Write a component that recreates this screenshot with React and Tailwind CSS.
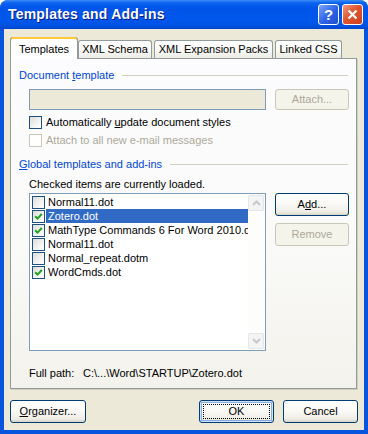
import React from "react";

const items = [
    { name: "Normal11.dot", checked: false },
    { name: "Zotero.dot", checked: true, selected: true },
    { name: "MathType Commands 6 For Word 2010.dot", checked: true },
    { name: "Normal11.dot", checked: false },
    { name: "Normal_repeat.dotm", checked: false },
    { name: "WordCmds.dot", checked: true },
];

function Check({ checked, disabled }) {
    return (
        <span
            className={
                disabled
                    ? "flex h-[13px] w-[13px] shrink-0 items-center justify-center border border-[#CAC8BB] bg-white"
                    : "flex h-[13px] w-[13px] shrink-0 items-center justify-center border border-[#1C5180] bg-[linear-gradient(135deg,#DCDCD7_0%,#F4F4F1_60%,#FFFFFF_100%)]"
            }
        >
            {checked && (
                <svg width="9" height="9" viewBox="0 0 9 9">
                    <path d="M1.2 4.2 L3.5 6.6 L7.8 2" stroke="#21A121" strokeWidth="2" fill="none" />
                </svg>
            )}
        </span>
    );
}

function Btn({ children, disabled, isDefault, className = "" }) {
    if (disabled) {
        return (
            <div className={`flex items-center justify-center rounded-[3px] border border-[#C9C7BA] bg-[#F5F4EA] text-[#ACA899] ${className}`}>
                {children}
            </div>
        );
    }
    return (
        <div
            className={`relative flex items-center justify-center rounded-[3px] border border-[#003C74] bg-[linear-gradient(to_bottom,#FFFFFF_0%,#F9F8F4_50%,#EEEDE5_85%,#D8D2C6_100%)] text-black ${isDefault ? "shadow-[inset_0_0_0_1px_#CEE3FC,inset_0_0_0_2px_#89ADE4]" : ""} ${className}`}
        >
            {isDefault && <span className="absolute inset-[3px] border border-dotted border-black" />}
            <span className="relative">{children}</span>
        </div>
    );
}

function GroupLabel({ children }) {
    return (
        <div className="flex h-[13px] items-center pl-[8px] pr-[8px]">
            <span className="text-[#0046D5]">{children}</span>
            <span className="ml-[8px] h-px flex-1 bg-[#D0D0BF]" />
        </div>
    );
}

function ScrollArrow({ up }) {
    return (
        <div className="flex h-[16px] w-[16px] items-center justify-center rounded-[2px] border border-[#E3E6EE] bg-[#F4F4F2]">
            <svg width="9" height="6" viewBox="0 0 9 6">
                <path d={up ? "M1 5 L4.5 1.5 L8 5" : "M1 1 L4.5 4.5 L8 1"} stroke="#C4C8D2" strokeWidth="2" fill="none" />
            </svg>
        </div>
    );
}

export default function App() {
    return (
        <div className="h-[434px] w-[368px] overflow-hidden rounded-t-[8px] bg-[#0854DD] font-['Liberation_Sans',Arial,sans-serif] text-[11px] leading-[13px] text-black">
            {/* title bar */}
            <div className="flex h-[29px] items-center bg-[linear-gradient(to_bottom,#3D8DF6_0px,#0A62F0_3px,#0055E8_8px,#0057EC_20px,#0051E0_26px,#0046CC_29px)] pl-[8px] pr-[5px]">
                <span className="flex-1 text-[14px] font-bold tracking-[0.2px] text-white [text-shadow:1px_1px_0_#0A1883]">
                    Templates and Add-ins
                </span>
                <div className="flex h-[21px] w-[21px] items-center justify-center rounded-[3px] border border-white bg-[linear-gradient(135deg,#7AA5F9_0%,#2D62E6_55%,#1F4FD0_100%)] text-[15px] font-bold text-white">
                    ?
                </div>
                <div className="ml-[3px] flex h-[21px] w-[21px] items-center justify-center rounded-[3px] border border-white bg-[linear-gradient(135deg,#F09A80_0%,#E2562F_45%,#C9411E_100%)]">
                    <svg width="11" height="11" viewBox="0 0 11 11">
                        <path d="M1.5 1.5 L9.5 9.5 M9.5 1.5 L1.5 9.5" stroke="white" strokeWidth="2.2" />
                    </svg>
                </div>
            </div>

            {/* body */}
            <div className="mx-[4px] h-[401px] bg-[#ECE9D8] px-[6px] pt-[7px]">
                {/* tabs */}
                <div className="flex h-[22px] items-end">
                    <div className="relative z-10 -mb-px flex h-[22px] w-[68px] items-center justify-center rounded-t-[3px] border-x border-[#919B9C] bg-white pt-[2px] shadow-[inset_0_2px_0_#FFC83C,inset_0_1px_0_#E68B2C]">
                        Templates
                    </div>
                    <div className="flex h-[18px] w-[74px] items-center justify-center rounded-t-[3px] border-x border-t border-[#919B9C] bg-[linear-gradient(to_bottom,#FFFFFF_0%,#F7F7F4_60%,#ECEBE5_100%)]">
                        XML Schema
                    </div>
                    <div className="ml-[2px] flex h-[18px] w-[119px] items-center justify-center rounded-t-[3px] border-x border-t border-[#919B9C] bg-[linear-gradient(to_bottom,#FFFFFF_0%,#F7F7F4_60%,#ECEBE5_100%)]">
                        XML Expansion Packs
                    </div>
                    <div className="ml-[2px] flex h-[18px] w-[67px] items-center justify-center rounded-t-[3px] border-x border-t border-[#919B9C] bg-[linear-gradient(to_bottom,#FFFFFF_0%,#F7F7F4_60%,#ECEBE5_100%)]">
                        Linked CSS
                    </div>
                </div>

                {/* panel */}
                <div className="h-[331px] w-[347px] border border-[#919B9C] bg-[linear-gradient(to_bottom,#FCFCFE_0%,#FAFAF9_55%,#F3F2EC_100%)] pt-[10px] shadow-[1px_1px_0_#D0CEBF]">
                    <GroupLabel>
                        Document <span className="underline">t</span>emplate
                    </GroupLabel>

                    <div className="mt-[7px] flex pl-[18px]">
                        <div className="h-[21px] w-[237px] border border-[#7F9DB9] bg-[#ECE9D8]" />
                        <Btn disabled className="ml-[9px] h-[21px] w-[74px]">Attach...</Btn>
                    </div>

                    <div className="mt-[6px] flex h-[13px] items-center pl-[18px]">
                        <Check />
                        <span className="ml-[4px]">
                            Automatically <span className="underline">u</span>pdate document styles
                        </span>
                    </div>
                    <div className="mt-[5px] flex h-[13px] items-center pl-[18px]">
                        <Check disabled />
                        <span className="ml-[4px] text-[#ACA899]">Attach to all new e-mail messages</span>
                    </div>

                    <div className="mt-[11px]">
                        <GroupLabel>
                            <span className="underline">G</span>lobal templates and add-ins
                        </GroupLabel>
                    </div>

                    <div className="mt-[7px] pl-[18px]">Checked items are currently loaded.</div>

                    <div className="mt-[2px] flex pl-[18px]">
                        <div className="flex h-[158px] w-[237px] border border-[#7F9DB9] bg-white">
                            <div className="min-w-0 flex-1 overflow-hidden pt-[1px]">
                                {items.map((item, i) => (
                                    <div key={i} className="flex h-[14px] items-center pl-[2px]">
                                        <Check checked={item.checked} />
                                        <span
                                            className={
                                                item.selected
                                                    ? "ml-[1px] flex h-[14px] flex-1 items-center whitespace-nowrap bg-[#316AC5] px-[2px] text-white"
                                                    : "ml-[1px] flex h-[14px] flex-1 items-center whitespace-nowrap px-[2px]"
                                            }
                                        >
                                            {item.name}
                                        </span>
                                    </div>
                                ))}
                            </div>
                            <div className="flex w-[17px] shrink-0 flex-col justify-between bg-[#FDFDFC] py-[1px]">
                                <ScrollArrow up />
                                <ScrollArrow />
                            </div>
                        </div>
                        <div className="ml-[9px] flex flex-col">
                            <Btn className="h-[23px] w-[74px]">
                                A<span className="underline">d</span>d...
                            </Btn>
                            <Btn disabled className="mt-[7px] h-[23px] w-[74px]">Remove</Btn>
                        </div>
                    </div>

                    <div className="mt-[16px] flex pl-[18px]">
                        <span className="w-[54px]">Full path:</span>
                        <span>C:\...\Word\STARTUP\Zotero.dot</span>
                    </div>
                </div>

                {/* buttons */}
                <div className="mt-[11px] flex">
                    <Btn className="h-[23px] w-[76px]">
                        <span className="underline">O</span>rganizer...
                    </Btn>
                    <Btn isDefault className="ml-[113px] h-[23px] w-[75px]">OK</Btn>
                    <Btn className="ml-[9px] h-[23px] w-[75px]">Cancel</Btn>
                </div>
            </div>
        </div>
    );
}
